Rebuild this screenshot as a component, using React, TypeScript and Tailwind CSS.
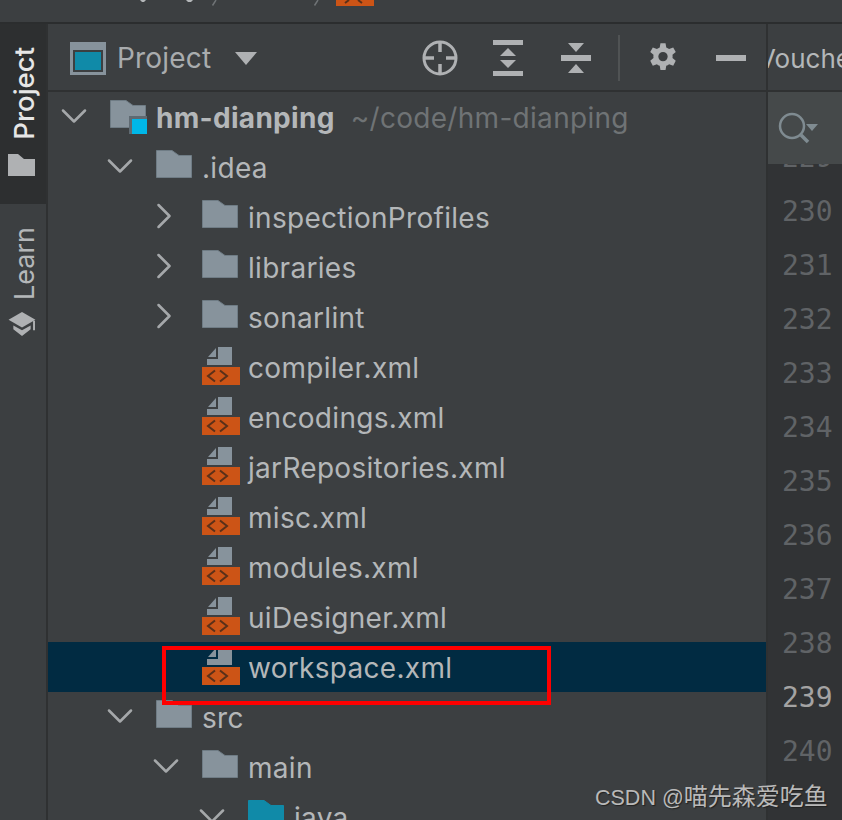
import { ChevronDown, ChevronRight } from 'lucide-react';

const Folder = ({ color = '#87939c', edge = '#6f7c85' }: { color?: string; edge?: string }) => (
  <svg width="36" height="28" viewBox="0 0 36 28" className="mb-[7px] shrink-0">
    <path d="M0.5 0.5H16L23 5.500H35.500V27.500H0.500Z" fill={color} stroke={edge} />
  </svg>
);

const XmlIcon = () => (
  <svg width="38" height="38" viewBox="0 0 38 38" className="mb-[2px] shrink-0">
    <path d="M16 0H30V18H5V12H16Z" fill="#87939c" />
    <path d="M14 1L6 10H14Z" fill="#87939c" />
    <rect x="0" y="20" width="38" height="18" fill="#cc5416" />
    <path d="M13 23.500L6 29L13 34.500M18 23.500L25 29L18 34.500" fill="none" stroke="#5a3019" strokeWidth="2" />
  </svg>
);

const Row = ({
  depth,
  arrow,
  icon,
  selected,
  children,
}: {
  depth: number;
  arrow?: 'open' | 'closed';
  icon: React.ReactNode;
  selected?: boolean;
  children: React.ReactNode;
}) => (
  <div className={`flex h-[50px] items-center ${selected ? 'bg-[#012b42]' : ''}`}>
    <div className="flex w-[46px] shrink-0 justify-center" style={{ marginLeft: depth * 46 + 3 }}>
      {arrow === 'open' && <ChevronDown size={44} strokeWidth={1.4} className="-my-[10px] mb-[-7px] shrink-0 text-[#a5a8aa]" />}
      {arrow === 'closed' && <ChevronRight size={44} strokeWidth={1.4} className="-my-[10px] -ml-[4px] mb-[-7px] shrink-0 text-[#a5a8aa]" />}
    </div>
    <div className="flex w-[59px] shrink-0 items-center pl-[13px]">{icon}</div>
    <div className="flex items-baseline whitespace-nowrap pt-[2px] text-[28px] tracking-[0.3px] text-[#b4b7b9]">{children}</div>
  </div>
);

const gutter = [230, 231, 232, 233, 234, 235, 236, 237, 238, 239, 240];

export default function App() {
  return (
    <div className="relative h-[820px] w-[842px] overflow-hidden bg-[#3c3f41] font-['Inter','Liberation_Sans',sans-serif]">
      {/* cut off breadcrumb */}
      <div className="h-[22px] bg-[#3c3f41]">
        <svg width="374" height="7" viewBox="0 0 374 7" className="block">
          <path d="M140 0H146L144 2H142ZM186 0H193L191 2H188Z" fill="#b4b7b9" />
          <path d="M216 0L212.500 5.500M318 0L314.500 5.500" stroke="#6f7375" strokeWidth="1.500" />
          <rect x="336" y="0" width="38" height="6" fill="#cc5416" />
          <path d="M349 0L345 3M358 0L362 3" stroke="#5a3019" strokeWidth="2" />
        </svg>
      </div>
      <div className="h-[2px] bg-[#2b2d2e]" />

      <div className="flex h-[796px]">
        {/* tool stripe */}
        <div className="flex w-[46px] shrink-0 flex-col">
          <div className="flex h-[180px] flex-col items-center justify-end bg-[#2d2f30] pb-[28px]">
            <span className="ml-[4px] rotate-180 text-[27.5px] font-medium leading-none text-[#e6e6e6] [writing-mode:vertical-rl]">
              Project
            </span>
            <svg width="27" height="22" viewBox="0 0 27 22" className="-ml-[3px] mt-[14px]">
              <path d="M0 0H10L16 5H27V22H0Z" fill="#afb1b3" />
            </svg>
          </div>
          <div className="flex flex-col items-center pt-[23px]">
            <span className="ml-[3px] rotate-180 text-[27px] leading-none text-[#b4b7b9] [writing-mode:vertical-rl]">
              Learn
            </span>
            <svg width="30" height="25" viewBox="0 0 30 26" className="-ml-[2px] mt-[12px]">
              <path d="M15 0L29 8L15 16L1 8Z" fill="#afb1b3" />
              <path d="M6 14L15 19L24 14V18L15 25L6 18Z" fill="#afb1b3" />
              <path d="M27.500 9V19" stroke="#afb1b3" strokeWidth="2" />
            </svg>
          </div>
        </div>
        <div className="w-[2px] shrink-0 bg-[#2f3132]" />

        {/* project panel */}
        <div className="w-[718px] shrink-0">
          <div className="flex h-[66px] items-center pt-[2px]">
            <svg width="36" height="33" viewBox="0 0 36 33" className="ml-[22px] shrink-0">
              <rect width="36" height="33" fill="#87939c" />
              <rect x="3" y="8" width="30" height="22" fill="#3c3f41" />
              <rect x="5" y="10" width="26" height="18" fill="#108aa8" />
            </svg>
            <span className="ml-[11px] w-[96px] text-[28px] tracking-[0.2px] text-[#a9acae]">Project</span>
            <svg width="22" height="13" viewBox="0 0 22 13" className="ml-[22px] mt-[1px] shrink-0">
              <path d="M0 0H22L11 13Z" fill="#afb1b3" />
            </svg>
            <svg width="36" height="36" viewBox="0 0 36 36" className="ml-[165px] shrink-0">
              <circle cx="18" cy="18" r="16" fill="none" stroke="#afb1b3" strokeWidth="3" />
              <path d="M3 18H12M24 18H33M18 3V12M18 24V33" stroke="#afb1b3" strokeWidth="3.500" />
            </svg>
            <svg width="30" height="36" viewBox="0 0 30 36" className="ml-[35px] shrink-0">
              <path d="M0 0H30V5H0ZM0 31H30V36H0Z" fill="#afb1b3" />
              <path d="M15 8L23 16H7ZM15 28L23 20H7Z" fill="#afb1b3" />
            </svg>
            <svg width="30" height="30" viewBox="0 0 30 30" className="ml-[38px] shrink-0">
              <path d="M0 12H30V18H0Z" fill="#afb1b3" />
              <path d="M7 0H23L15 9ZM7 30H23L15 21Z" fill="#afb1b3" />
            </svg>
            <div className="ml-[27px] h-[46px] w-[2px] shrink-0 bg-[#505354]" />
            <svg width="34" height="34" viewBox="0 0 24 24" className="ml-[26px] shrink-0">
              <path
                fill="#afb1b3"
                fillRule="evenodd"
                d="M13.800 1.500h-3.600l-.5 3a7.500 7.500 0 0 0-2 1.150L4.800 4.600 3 7.700l2.300 1.950a7.500 7.500 0 0 0 0 2.300L3 13.900l1.800 3.500 2.900-1.050a7.500 7.500 0 0 0 2 1.150l.5 3h3.600l.5-3a7.500 7.500 0 0 0 2-1.150l2.900 1.050 1.800-3.500-2.300-1.950a7.500 7.500 0 0 0 0-2.300L21 7.700l-1.800-3.100-2.900 1.050a7.500 7.500 0 0 0-2-1.150zM12 7.700a3.300 3.300 0 1 1 0 6.600 3.300 3.300 0 0 1 0-6.600z"
              />
            </svg>
            <div className="ml-[36px] h-[6px] w-[30px] shrink-0 bg-[#afb1b3]" />
          </div>
          <div className="h-[2px] bg-[#2f3132]" />

          <Row depth={0} arrow="open" icon={
            <div className="relative mb-[7px] h-[28px]">
              <svg width="36" height="28" viewBox="0 0 36 28" className="block">
                <path d="M0.5 0.5H16L23 5.500H35.500V27.500H0.500Z" fill="#87939c" stroke="#6f7c85" />
              </svg>
              <div className="absolute left-[19px] top-[16px] box-content h-[15px] w-[15px] border-l-[3px] border-t-[3px] border-[#5f6a72] bg-[#00b7e8]" />
            </div>
          }>
            <span className="font-bold">hm-dianping</span>
            <span className="ml-[16px] text-[#6f7375]">~/code/hm-dianping</span>
          </Row>
          <Row depth={1} arrow="open" icon={<Folder />}>.idea</Row>
          <Row depth={2} arrow="closed" icon={<Folder />}>inspectionProfiles</Row>
          <Row depth={2} arrow="closed" icon={<Folder />}>libraries</Row>
          <Row depth={2} arrow="closed" icon={<Folder />}>sonarlint</Row>
          <Row depth={2} icon={<XmlIcon />}>compiler.xml</Row>
          <Row depth={2} icon={<XmlIcon />}>encodings.xml</Row>
          <Row depth={2} icon={<XmlIcon />}>jarRepositories.xml</Row>
          <Row depth={2} icon={<XmlIcon />}>misc.xml</Row>
          <Row depth={2} icon={<XmlIcon />}>modules.xml</Row>
          <Row depth={2} icon={<XmlIcon />}>uiDesigner.xml</Row>
          <Row depth={2} selected icon={<XmlIcon />}>workspace.xml</Row>
          <Row depth={1} arrow="open" icon={<Folder />}>src</Row>
          <Row depth={2} arrow="open" icon={<Folder />}>main</Row>
          <Row depth={3} arrow="open" icon={<Folder color="#108aa8" edge="#108aa8" />}>java</Row>
        </div>
        <div className="w-[2px] shrink-0 bg-[#2f3132]" />

        {/* editor edge */}
        <div className="min-w-0 flex-1 overflow-hidden">
          <div className="flex h-[66px] items-center overflow-hidden whitespace-nowrap pt-[2px] text-[26px] text-[#b4b7b9]">
            <span className="-ml-[10px]">Voucher</span>
          </div>
          <div className="h-[2px] bg-[#2f3132]" />
          <div className="flex h-[72px] items-center bg-[#45494a] pl-[9px]">
            <svg width="42" height="32" viewBox="0 0 42 32">
              <circle cx="15" cy="14" r="12" fill="none" stroke="#7f8b91" strokeWidth="2.500" />
              <path d="M24 23L31 30" stroke="#7f8b91" strokeWidth="3.500" />
              <path d="M29 12H41L35 19Z" fill="#7f8b91" />
            </svg>
          </div>
          <div className="h-[656px] overflow-hidden bg-[#313335] font-['DejaVu_Sans_Mono','Liberation_Mono',monospace] text-[28px] text-[#606366]">
            <div className="-mt-[33px] h-[54px] pl-[14px] leading-[54px]">229</div>
            {gutter.map((n) => (
              <div key={n} className={`h-[54px] pl-[14px] leading-[54px] ${n === 239 ? 'text-[#a4a3a3]' : ''}`}>
                {n}
              </div>
            ))}
          </div>
        </div>
      </div>

      {/* annotation */}
      <div className="absolute left-[162px] top-[646px] h-[59px] w-[389px] border-[4px] border-[#fe0000]" />
      <div className="absolute left-[595px] top-[783px] whitespace-nowrap font-['Liberation_Sans','Noto_Sans_CJK_SC',sans-serif] text-[24px] leading-[28px] text-[#b9b9b9] [text-shadow:1px_1px_1px_#222]">
        <span className="text-[21.500px]">CSDN @</span>喵先森爱吃鱼
      </div>
    </div>
  );
}
